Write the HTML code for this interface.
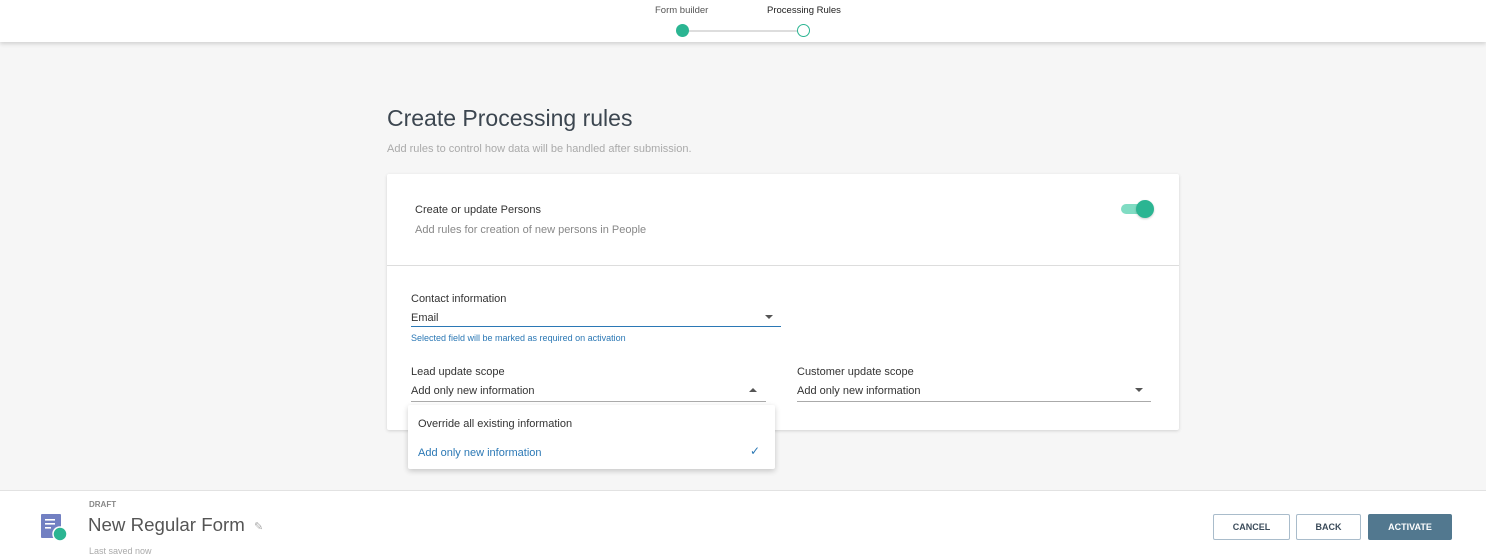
<!DOCTYPE html>
<html><head><style>
*{margin:0;padding:0;box-sizing:border-box}
body{width:1486px;height:559px;background:#f6f6f6;font-family:"Liberation Sans",sans-serif;position:relative;overflow:hidden;color:#333}
.abs{position:absolute}
.top{left:0;top:0;width:1486px;height:42px;background:#fff;box-shadow:0 2px 4px rgba(0,0,0,.15)}
.card{left:387px;top:174px;width:792px;height:256px;background:#fff;box-shadow:0 1px 3px rgba(0,0,0,.15);border-radius:2px}
.lbl{font-size:11px;color:#333}
.val{font-size:11px;color:#333}
.foot{left:0;top:490px;width:1486px;height:69px;background:#fff;border-top:1px solid #e2e2e2}
.btn{top:514px;height:26px;border:1px solid #a9bccb;background:#fff;font-size:9px;font-weight:bold;color:#3b4b5a;text-align:center;line-height:24px;border-radius:2px}
</style></head><body>
<div class="abs top"></div>
<div class="abs" style="left:655px;top:5px;font-size:9.5px;color:#555">Form builder</div>
<div class="abs" style="left:767px;top:5px;font-size:9.5px;color:#222">Processing Rules</div>
<div class="abs" style="left:682px;top:30px;width:121px;height:2px;background:#ddd"></div>
<div class="abs" style="left:676px;top:24px;width:13px;height:13px;border-radius:50%;background:#2bb592"></div>
<div class="abs" style="left:797px;top:24px;width:13px;height:13px;border-radius:50%;background:#fff;border:1.5px solid #2bb592"></div>

<div class="abs" style="left:387px;top:105px;font-size:23px;color:#3c4650">Create Processing rules</div>
<div class="abs" style="left:387px;top:143px;font-size:11px;color:#aaa">Add rules to control how data will be handled after submission.</div>

<div class="abs card"></div>
<div class="abs" style="left:415px;top:204px;font-size:11px;color:#333">Create or update Persons</div>
<div class="abs" style="left:415px;top:224px;font-size:11px;color:#888">Add rules for creation of new persons in People</div>
<div class="abs" style="left:1121px;top:204px;width:30px;height:10px;border-radius:5px;background:#80dcc3"></div>
<div class="abs" style="left:1136px;top:200px;width:18px;height:18px;border-radius:50%;background:#2bb592;box-shadow:0 1px 2px rgba(0,0,0,.2)"></div>
<div class="abs" style="left:387px;top:265px;width:792px;height:1px;background:#ddd"></div>

<div class="abs lbl" style="left:411px;top:293px">Contact information</div>
<div class="abs val" style="left:411px;top:312px">Email</div>
<div class="abs" style="left:765px;top:315px;border:4px solid transparent;border-top:4px solid #555;border-bottom:0"></div>
<div class="abs" style="left:411px;top:326px;width:370px;height:1px;background:#2b78b5"></div>
<div class="abs" style="left:411px;top:333px;font-size:9px;color:#2b78b5">Selected field will be marked as required on activation</div>

<div class="abs lbl" style="left:411px;top:366px">Lead update scope</div>
<div class="abs val" style="left:411px;top:385px">Add only new information</div>
<div class="abs" style="left:749px;top:388px;border:4px solid transparent;border-bottom:4px solid #555;border-top:0"></div>
<div class="abs" style="left:411px;top:401px;width:355px;height:1px;background:#aaa"></div>

<div class="abs lbl" style="left:797px;top:366px">Customer update scope</div>
<div class="abs val" style="left:797px;top:385px">Add only new information</div>
<div class="abs" style="left:1135px;top:388px;border:4px solid transparent;border-top:4px solid #555;border-bottom:0"></div>
<div class="abs" style="left:797px;top:401px;width:354px;height:1px;background:#aaa"></div>

<div class="abs" style="left:408px;top:405px;width:367px;height:64px;background:#fff;box-shadow:0 2px 6px rgba(0,0,0,.2);border-radius:2px"></div>
<div class="abs" style="left:418px;top:418px;font-size:11px;color:#333">Override all existing information</div>
<div class="abs" style="left:418px;top:447px;font-size:11px;color:#2b78b5">Add only new information</div>
<div class="abs" style="left:750px;top:444px;font-size:12px;color:#2b78b5">✓</div>

<div class="abs foot"></div>
<svg class="abs" style="left:40px;top:512px" width="28" height="30"><rect x="1" y="2" width="20" height="24" rx="1" fill="#7280c2"/><rect x="5" y="7" width="10" height="1.6" fill="#fff"/><rect x="5" y="11" width="10" height="1.6" fill="#fff"/><rect x="5" y="15" width="6" height="1.6" fill="#fff"/><circle cx="20" cy="22" r="7" fill="#2bb592" stroke="#fff" stroke-width="1.5"/></svg>
<div class="abs" style="left:89px;top:500px;font-size:8px;font-weight:bold;color:#888">DRAFT</div>
<div class="abs" style="left:88px;top:514px;font-size:18.7px;color:#555">New Regular Form</div>
<div class="abs" style="left:254px;top:520px;font-size:11px;color:#aaa">✎</div>
<div class="abs" style="left:89px;top:546px;font-size:9px;color:#aaa">Last saved now</div>
<div class="abs btn" style="left:1213px;width:77px">CANCEL</div>
<div class="abs btn" style="left:1296px;width:65px">BACK</div>
<div class="abs btn" style="left:1368px;width:84px;background:#52788f;border-color:#52788f;color:#fff">ACTIVATE</div>
</body></html>
